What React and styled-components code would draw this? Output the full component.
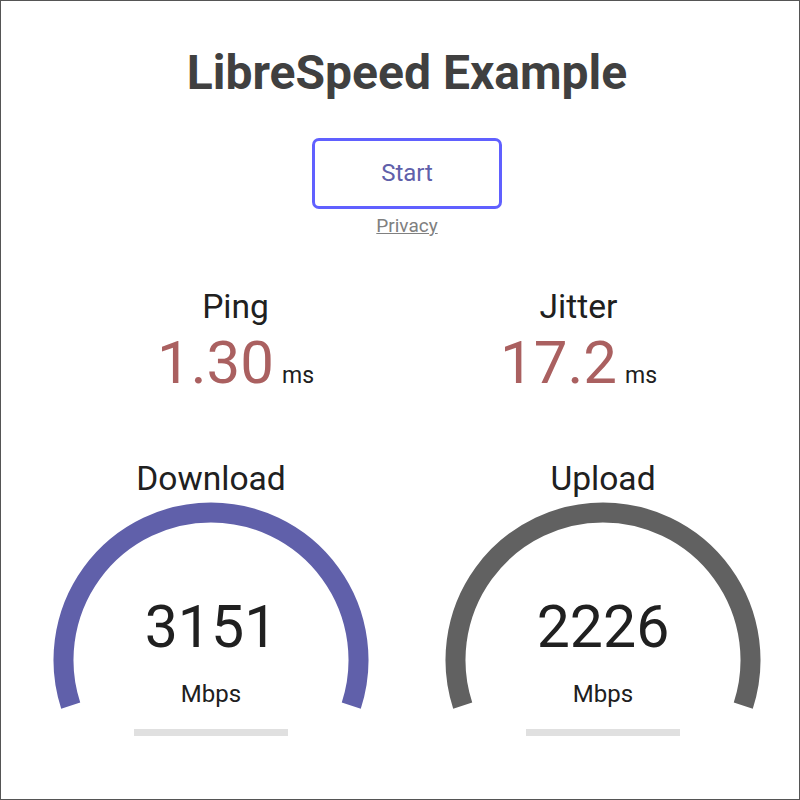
import React from "react";
import styled, { createGlobalStyle } from "styled-components";

const GlobalStyle = createGlobalStyle`
	html, body {
		margin: 0;
		padding: 0;
		background: #fff;
	}

	body {
		font-family: Roboto, "Liberation Sans", sans-serif;
	}
`;

const Page = styled.div`
	width: 800px;
	height: 800px;
	box-sizing: border-box;
	border: 1px solid #555;
	padding-left: 14px;
	overflow: hidden;

	display: flex;
	flex-direction: column;
	align-items: center;
	text-align: center;
	color: #202020;
`;

const Title = styled.h1`
	margin: 44px 0 0;
	font-size: 48px;
	line-height: 56px;
	font-weight: 700;
	color: #404040;
`;

const StartButton = styled.div`
	margin-top: 37px;
	width: 190px;
	height: 71px;
	box-sizing: border-box;
	border: 3px solid #6060ff;
	border-radius: 7px;
	color: #6060aa;
	font-size: 24px;
	line-height: 64px;
	cursor: pointer;
`;

const Privacy = styled.a`
	margin-top: 6px;
	font-size: 19px;
	line-height: 22px;
	color: #808080;
	text-decoration: underline;
	cursor: pointer;
`;

const Row = styled.div`
	display: flex;
	justify-content: center;
	margin-top: ${props => props.$top}px;
`;

const SmallArea = styled.div`
	width: 343px;
	display: flex;
	flex-direction: column;
	align-items: center;
`;

const TestName = styled.div`
	font-size: 33.6px;
	line-height: 40px;
`;

const MeterText = styled.div`
	margin-top: 6px;
	font-size: 60px;
	line-height: 60px;
	color: #aa6060;
	white-space: nowrap;
`;

const Unit = styled.span`
	margin-left: 8px;
	font-size: 23px;
	line-height: 1;
	color: #202020;
`;

const GaugeArea = styled.div`
	width: 392px;
	display: flex;
	flex-direction: column;
	align-items: center;
`;

const GaugeBox = styled.div`
	display: grid;
	width: 392px;
	height: 245px;

	& > * {
		grid-area: 1 / 1;
	}
`;

const GaugeText = styled.div`
	display: flex;
	flex-direction: column;
	align-items: center;
	padding-top: 96px;
`;

const Speed = styled.div`
	font-size: 59px;
	line-height: 64px;
	color: #202020;
`;

const SpeedUnit = styled.div`
	margin-top: 21px;
	font-size: 24px;
	line-height: 28px;
	color: #202020;
`;

const cx = 196;
const cy = 161;
const r = 147.5;
const dx = r * Math.cos(Math.PI * 0.1);
const dy = r * Math.sin(Math.PI * 0.1);
const arcPath = `M ${cx - dx} ${cy + dy} A ${r} ${r} 0 1 1 ${cx + dx} ${cy + dy}`;

const Gauge = ({ name, value, color }) => (
	<GaugeArea>
		<TestName>{name}</TestName>
		<GaugeBox>
			<svg width="392" height="245" viewBox="0 0 392 245">
				<path d={arcPath} fill="none" stroke={color} strokeWidth="20" />
				<rect x="119" y="230" width="154" height="7" fill="#e0e0e0" />
			</svg>
			<GaugeText>
				<Speed>{value}</Speed>
				<SpeedUnit>Mbps</SpeedUnit>
			</GaugeText>
		</GaugeBox>
	</GaugeArea>
);

const Stat = ({ name, value }) => (
	<SmallArea>
		<TestName>{name}</TestName>
		<MeterText>
			{value}
			<Unit>ms</Unit>
		</MeterText>
	</SmallArea>
);

const App = () => (
	<>
		<GlobalStyle />
		<Page>
			<Title>LibreSpeed Example</Title>
			<StartButton>Start</StartButton>
			<Privacy>Privacy</Privacy>

			<Row $top={50}>
				<Stat name="Ping" value="1.30" />
				<Stat name="Jitter" value="17.2" />
			</Row>

			<Row $top={66}>
				<Gauge name="Download" value="3151" color="#6060aa" />
				<Gauge name="Upload" value="2226" color="#616161" />
			</Row>
		</Page>
	</>
);

export default App;
